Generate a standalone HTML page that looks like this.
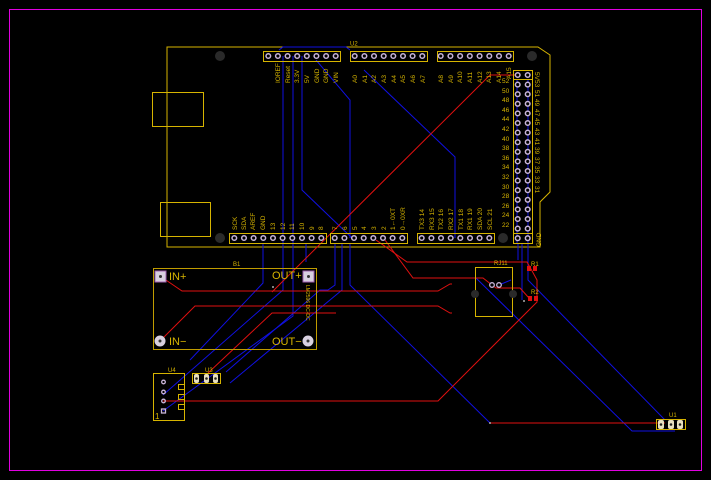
<!DOCTYPE html>
<html><head><meta charset="utf-8"><style>
html,body{margin:0;padding:0;background:#000;width:711px;height:480px;overflow:hidden}
svg{display:block}
text{font-family:"Liberation Sans",sans-serif;fill:#d6b400}
</style></head><body>
<svg width="711" height="480" viewBox="0 0 711 480" xmlns="http://www.w3.org/2000/svg">
<g fill="#e000e0" shape-rendering="crispEdges">
<rect x="9" y="9" width="693" height="1"/><rect x="9" y="470" width="693" height="1"/>
<rect x="9" y="9" width="1" height="462"/><rect x="701" y="9" width="1" height="462"/>
</g>
<path d="M167 47 H538 L550 55 V192 L540 202 V247 H167 Z" fill="none" stroke="#d6b400" stroke-width="1"/>
<rect x="152.5" y="92.5" width="51" height="34" fill="none" stroke="#d6b400"/>
<rect x="160.5" y="202.5" width="50" height="34" fill="none" stroke="#d6b400"/>
<g fill="#2a2a2a"><circle cx="220" cy="56" r="5"/><circle cx="532" cy="56" r="5"/><circle cx="220" cy="238" r="5"/><circle cx="503" cy="238" r="5"/></g>

<g fill="none" stroke="#1010e0" stroke-width="1">
<path d="M283 56 V290 L163 395"/>
<path d="M293 56 V316 L163 411"/>
<path d="M302 56 V190 L352 238"/>
<path d="M316 60 L350 100 V238"/>
<path d="M364 70 L455 157 V238"/>
<path d="M279 50 L283 47 H346 L350 50"/>
<path d="M263 243 V283 L190 360"/>
<path d="M306 243 V262"/>
<path d="M342 243 V290 L230 383"/>
<path d="M350 243 V285 L490 423"/>
<path d="M335 243 V285 L328 290 H320 L226 372"/>
<path d="M517 80 V243 M528 80 V243"/>
<path d="M528 243 V280 L665 420"/>
<path d="M476 278 L632 431 H675"/>
<path d="M518 243 V260 M522 243 V300"/>
<path d="M511 280 L499 285"/>
</g>
<g fill="none" stroke="#e01010" stroke-width="1">
<path d="M517 75 H490 L272 292"/>
<path d="M376 240 L407 262 H527 L531 269"/>
<path d="M385 240 L413 278 H483 L492 285 L496 288 H520 L529 298"/>
<path d="M160 276 L182 291 H438 L450 284 H452"/>
<path d="M160 341 L195 306 H438 L450 313 H452"/>
<path d="M208 373 L272 313 H336"/>
<path d="M163 401 H438 L537 302 V280 L531 269"/>
<path d="M490 423 H665"/>
</g>

<g fill="none" stroke="#d6b400" stroke-width="1">
<rect x="263.5" y="51.5" width="77" height="10"/>
<rect x="350.5" y="51.5" width="77" height="10"/>
<rect x="437.5" y="51.5" width="76" height="10"/>
<rect x="513.5" y="70.5" width="19" height="173"/>
<rect x="513.5" y="70.5" width="19" height="9"/>
<rect x="513.5" y="233.5" width="19" height="10"/>
<rect x="229.5" y="233.5" width="97" height="10"/>
<rect x="330.5" y="233.5" width="77" height="10"/>
<rect x="417.5" y="233.5" width="77" height="10"/>
</g>
<g fill="#000" stroke="#c8b4d8" stroke-width="1.5">
<circle cx="268.3" cy="56" r="2.3"/><circle cx="277.9" cy="56" r="2.3"/><circle cx="287.6" cy="56" r="2.3"/><circle cx="297.2" cy="56" r="2.3"/><circle cx="306.8" cy="56" r="2.3"/><circle cx="316.4" cy="56" r="2.3"/><circle cx="326.1" cy="56" r="2.3"/><circle cx="335.7" cy="56" r="2.3"/>
<circle cx="354.7" cy="56" r="2.3"/><circle cx="364.4" cy="56" r="2.3"/><circle cx="374" cy="56" r="2.3"/><circle cx="383.7" cy="56" r="2.3"/><circle cx="393.3" cy="56" r="2.3"/><circle cx="403" cy="56" r="2.3"/><circle cx="412.6" cy="56" r="2.3"/><circle cx="422.3" cy="56" r="2.3"/>
<circle cx="440.7" cy="56" r="2.3"/><circle cx="450.4" cy="56" r="2.3"/><circle cx="460.1" cy="56" r="2.3"/><circle cx="469.8" cy="56" r="2.3"/><circle cx="479.6" cy="56" r="2.3"/><circle cx="489.3" cy="56" r="2.3"/><circle cx="499" cy="56" r="2.3"/><circle cx="508.7" cy="56" r="2.3"/>
<circle cx="234.3" cy="238" r="2.3"/><circle cx="244" cy="238" r="2.3"/><circle cx="253.6" cy="238" r="2.3"/><circle cx="263.3" cy="238" r="2.3"/><circle cx="273" cy="238" r="2.3"/><circle cx="282.6" cy="238" r="2.3"/><circle cx="292.3" cy="238" r="2.3"/><circle cx="302" cy="238" r="2.3"/><circle cx="311.6" cy="238" r="2.3"/><circle cx="321.3" cy="238" r="2.3"/>
<circle cx="334.7" cy="238" r="2.3"/><circle cx="344.4" cy="238" r="2.3"/><circle cx="354" cy="238" r="2.3"/><circle cx="363.7" cy="238" r="2.3"/><circle cx="373.3" cy="238" r="2.3"/><circle cx="383" cy="238" r="2.3"/><circle cx="392.6" cy="238" r="2.3"/><circle cx="402.3" cy="238" r="2.3"/>
<circle cx="421.7" cy="238" r="2.3"/><circle cx="431.4" cy="238" r="2.3"/><circle cx="441" cy="238" r="2.3"/><circle cx="450.7" cy="238" r="2.3"/><circle cx="460.3" cy="238" r="2.3"/><circle cx="470" cy="238" r="2.3"/><circle cx="479.6" cy="238" r="2.3"/><circle cx="489.3" cy="238" r="2.3"/>
</g>
<g fill="#000" stroke="#c8b4d8" stroke-width="1.5">
<g id="rc">
<circle cx="517.7" cy="75" r="2.3"/><circle cx="517.7" cy="84.6" r="2.3"/><circle cx="517.7" cy="94.2" r="2.3"/><circle cx="517.7" cy="103.8" r="2.3"/><circle cx="517.7" cy="113.4" r="2.3"/><circle cx="517.7" cy="123" r="2.3"/><circle cx="517.7" cy="132.6" r="2.3"/><circle cx="517.7" cy="142.2" r="2.3"/><circle cx="517.7" cy="151.8" r="2.3"/><circle cx="517.7" cy="161.4" r="2.3"/><circle cx="517.7" cy="171" r="2.3"/><circle cx="517.7" cy="180.6" r="2.3"/><circle cx="517.7" cy="190.2" r="2.3"/><circle cx="517.7" cy="199.8" r="2.3"/><circle cx="517.7" cy="209.4" r="2.3"/><circle cx="517.7" cy="219" r="2.3"/><circle cx="517.7" cy="228.6" r="2.3"/><circle cx="517.7" cy="238.2" r="2.3"/>
</g>
<use href="#rc" x="10"/>
</g>

<g font-size="6.5">
<text x="350" y="45.5" font-size="6">U2</text>
<g transform="rotate(-90)">
<text x="-83" y="280">IOREF</text><text x="-83" y="290">Reset</text><text x="-83" y="299">3.3V</text><text x="-83" y="309">5V</text><text x="-83" y="319">GND</text><text x="-83" y="328">GND</text><text x="-83" y="338">VIN</text>
<text x="-83" y="357">A0</text><text x="-83" y="367">A1</text><text x="-83" y="376">A2</text><text x="-83" y="386">A3</text><text x="-83" y="396">A4</text><text x="-83" y="405">A5</text><text x="-83" y="415">A6</text><text x="-83" y="425">A7</text>
<text x="-83" y="443">A8</text><text x="-83" y="453">A9</text><text x="-83" y="462">A10</text><text x="-83" y="472">A11</text><text x="-83" y="482">A12</text><text x="-83" y="491">A13</text><text x="-83" y="501">A14</text><text x="-79" y="511">A15</text>
<text x="-230" y="237">SCK</text><text x="-230" y="246">SDA</text><text x="-230" y="255">AREF</text><text x="-230" y="265">GND</text><text x="-230" y="275">13</text><text x="-230" y="285">12</text><text x="-230" y="294">11</text><text x="-230" y="304">10</text><text x="-230" y="314">9</text><text x="-230" y="323">8</text>
<text x="-230" y="337">7</text><text x="-230" y="347">6</text><text x="-230" y="357">5</text><text x="-230" y="366">4</text><text x="-230" y="376">3</text><text x="-230" y="386">2</text><text x="-230" y="395">1←0XT</text><text x="-230" y="405">0→0XR</text>
<text x="-230" y="424">TX3 14</text><text x="-230" y="434">RX3 15</text><text x="-230" y="443">TX2 16</text><text x="-230" y="453">RX2 17</text><text x="-230" y="463">TX1 18</text><text x="-230" y="472">RX1 19</text><text x="-230" y="482">SDA 20</text><text x="-230" y="492">SCL 21</text>
<text x="-247" y="541">GND</text>
</g>
<text x="502" y="83">52</text><text x="502" y="93">50</text><text x="502" y="102">48</text><text x="502" y="112">46</text><text x="502" y="121">44</text><text x="502" y="131">42</text><text x="502" y="141">40</text><text x="502" y="150">38</text><text x="502" y="160">36</text><text x="502" y="169">34</text><text x="502" y="179">32</text><text x="502" y="189">30</text><text x="502" y="198">28</text><text x="502" y="208">26</text><text x="502" y="217">24</text><text x="502" y="227">22</text>
<text transform="translate(535,72) rotate(90)">5V</text>
<text transform="translate(535,80) rotate(90)">53</text><text transform="translate(535,90) rotate(90)">51</text><text transform="translate(535,99) rotate(90)">49</text><text transform="translate(535,109) rotate(90)">47</text><text transform="translate(535,118) rotate(90)">45</text><text transform="translate(535,128) rotate(90)">43</text><text transform="translate(535,138) rotate(90)">41</text><text transform="translate(535,147) rotate(90)">39</text><text transform="translate(535,157) rotate(90)">37</text><text transform="translate(535,166) rotate(90)">35</text><text transform="translate(535,176) rotate(90)">33</text><text transform="translate(535,186) rotate(90)">31</text>
</g>

<rect x="153.5" y="268.5" width="163" height="81" fill="none" stroke="#c09c00" stroke-width="1"/>
<text x="233" y="266" font-size="6">B1</text>
<rect x="155" y="271" width="11" height="11" fill="#d8d0e0" stroke="#a060b0"/><circle cx="160.5" cy="276.5" r="1.5" fill="#333"/>
<rect x="303" y="271" width="11" height="11" fill="#d8d0e0" stroke="#a060b0"/><circle cx="308.5" cy="276.5" r="1.5" fill="#333"/>
<circle cx="160" cy="341" r="5.5" fill="#d8d0e0"/><circle cx="160" cy="341" r="1.5" fill="#333"/>
<circle cx="308" cy="341" r="5.5" fill="#d8d0e0"/><circle cx="308" cy="341" r="1.5" fill="#333"/>
<g font-size="11"><text x="169" y="280">IN+</text><text x="272" y="279">OUT+</text><text x="169" y="345">IN−</text><text x="272" y="345">OUT−</text></g>
<text transform="translate(306,285) rotate(90)" font-size="5">LM2596 DC-DC</text>

<rect x="475.5" y="267.5" width="37" height="49" fill="none" stroke="#d6b400"/>
<text x="494" y="265" font-size="6">RJ11</text>
<circle cx="475" cy="294" r="4" fill="#2a2a2a"/><circle cx="513" cy="294" r="4" fill="#2a2a2a"/>
<circle cx="492" cy="285" r="2.3" fill="#000" stroke="#c8b4d8" stroke-width="1.3"/><circle cx="499" cy="285" r="2.3" fill="#000" stroke="#c8b4d8" stroke-width="1.3"/>
<text x="531" y="266" font-size="6">R1</text><text x="531" y="294" font-size="6">R2</text>
<rect x="527" y="266" width="4" height="5" fill="#e01010"/><rect x="533" y="266" width="4" height="5" fill="#e01010"/>
<rect x="528" y="296" width="4" height="5" fill="#e01010"/><rect x="534" y="296" width="4" height="5" fill="#e01010"/>

<text x="205" y="372" font-size="6">U3</text>
<rect x="192.5" y="373.5" width="28" height="10" fill="none" stroke="#d6b400"/>
<g fill="#e8e0c0"><rect x="194" y="374" width="5" height="9" rx="2"/><rect x="204" y="374" width="5" height="9" rx="2"/><rect x="213" y="374" width="5" height="9" rx="2"/></g>
<g fill="#222"><circle cx="196.5" cy="378.5" r="1.3"/><circle cx="206.5" cy="378.5" r="1.3"/><circle cx="215.5" cy="378.5" r="1.3"/></g>
<text x="168" y="372" font-size="6">U4</text>
<rect x="153.5" y="373.5" width="31" height="47" fill="none" stroke="#d6b400"/>
<g fill="none" stroke="#c8b4d8" stroke-width="1.3"><circle cx="163.5" cy="382" r="1.8"/><circle cx="163.5" cy="392" r="1.8"/><circle cx="163.5" cy="401" r="1.8"/><rect x="161.5" y="409" width="4" height="4"/></g>
<g fill="none" stroke="#d6b400"><rect x="178.5" y="384.5" width="6" height="5"/><rect x="178.5" y="394.5" width="6" height="5"/><rect x="178.5" y="404.5" width="6" height="5"/></g>
<text x="155" y="419" font-size="8">1</text>
<text x="669" y="417" font-size="6">U1</text>
<rect x="656.5" y="419.5" width="29" height="10" fill="none" stroke="#d6b400"/>
<g fill="#e8e0c0"><rect x="658" y="420" width="6" height="9" rx="2"/><rect x="668" y="420" width="6" height="9" rx="2"/><rect x="677" y="420" width="6" height="9" rx="2"/></g>
<g fill="#222"><circle cx="661" cy="424.5" r="1.3"/><circle cx="671" cy="424.5" r="1.3"/><circle cx="680" cy="424.5" r="1.3"/></g>
<g fill="#aaa"><circle cx="490" cy="423" r="1"/><circle cx="273" cy="287" r="1"/><circle cx="524" cy="301" r="1"/></g>
</svg>
</body></html>
